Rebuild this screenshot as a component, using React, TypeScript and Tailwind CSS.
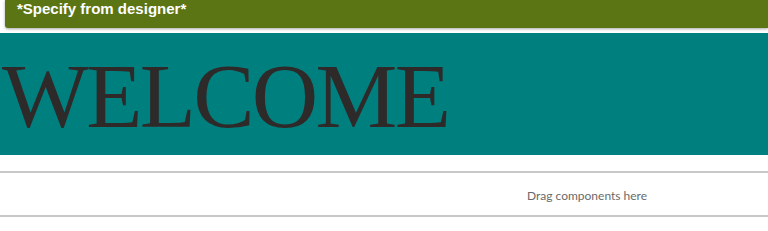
import React from 'react';

const App: React.FC = () => {
  return (
    <div className="w-[768px] h-[231px] bg-white overflow-hidden">
      {/* Designer note bar */}
      <div className="ml-[5px] h-[28px] bg-[#5b7514] rounded-bl-[3px] shadow-[0_1px_3px_rgba(0,0,0,0.35)] pl-[12px]">
        <span
          className="block text-white font-bold text-[15px] leading-[15px] pt-[1px]"
          style={{ fontFamily: '"Liberation Sans", Arial, sans-serif' }}
        >
          *Specify from designer*
        </span>
      </div>

      {/* Hero */}
      <div className="mt-[5px] h-[122px] bg-[#007f7f] flex items-center">
        <h1
          className="text-[#2e2a2a] text-[92px] leading-none tracking-[-2.7px] ml-[2px] mt-[3px]"
          style={{ fontFamily: '"Liberation Serif", "Times New Roman", serif' }}
        >
          WELCOME
        </h1>
      </div>

      {/* Drop zone */}
      <div className="mt-[16px] border-t-2 border-b-2 border-[#c8c8c8] h-[46px] flex items-center">
        <span
          className="ml-[527px] mt-[3px] text-[12px] text-[#6a6a6a]"
          style={{ fontFamily: 'Lato, "Open Sans", sans-serif' }}
        >
          Drag components here
        </span>
      </div>
    </div>
  );
};

export default App;
